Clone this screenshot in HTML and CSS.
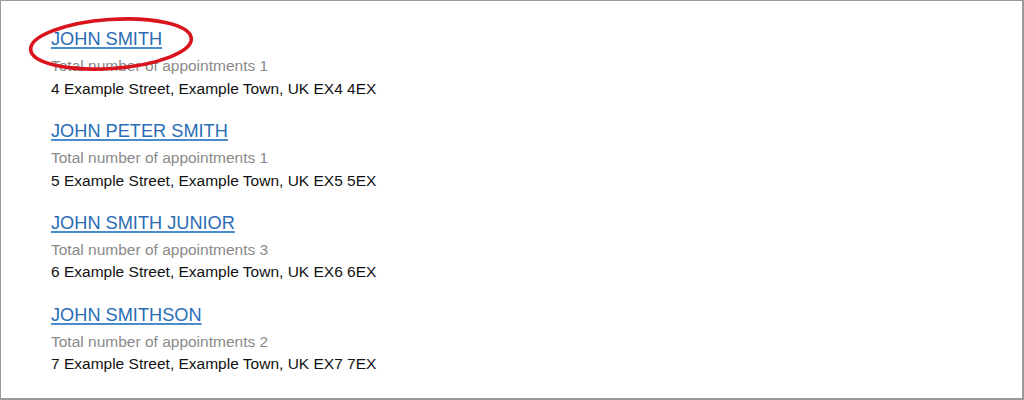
FILE: index.html
```html
<!DOCTYPE html>
<html lang="en">
<head>
<meta charset="utf-8">
<title>Patients</title>
<link rel="stylesheet" href="styles.css">
</head>
<body>
<div class="frame">
  <ul class="results">
    <li class="entry">
      <a class="name" href="#">JOHN SMITH</a>
      <svg class="circle" width="190" height="70" viewBox="0 0 190 70" aria-hidden="true">
        <ellipse cx="90" cy="31" rx="80.5" ry="24.5" fill="none" stroke="#d9141c" stroke-width="3.6" transform="rotate(-4 90 31)"/>
      </svg>
      <div class="count">Total number of appointments 1</div>
      <div class="addr">4 Example Street, Example Town, UK EX4 4EX</div>
    </li>
    <li class="entry">
      <a class="name" href="#">JOHN PETER SMITH</a>
      <div class="count">Total number of appointments 1</div>
      <div class="addr">5 Example Street, Example Town, UK EX5 5EX</div>
    </li>
    <li class="entry">
      <a class="name" href="#">JOHN SMITH JUNIOR</a>
      <div class="count">Total number of appointments 3</div>
      <div class="addr">6 Example Street, Example Town, UK EX6 6EX</div>
    </li>
    <li class="entry">
      <a class="name" href="#">JOHN SMITHSON</a>
      <div class="count">Total number of appointments 2</div>
      <div class="addr">7 Example Street, Example Town, UK EX7 7EX</div>
    </li>
  </ul>
</div>
</body>
</html>
```
FILE: styles.css
```css
html, body {
  margin: 0;
  padding: 0;
  background: #ffffff;
}
body {
  font-family: "Liberation Sans", Arial, sans-serif;
}
.frame {
  box-sizing: border-box;
  width: 1024px;
  height: 400px;
  border: 1px solid #9a9a9a;
  border-right-width: 2px;
  border-bottom-width: 2px;
  padding: 26px 0 0 50px;
}
.results {
  list-style: none;
  margin: 0;
  padding: 0;
  display: flex;
  flex-direction: column;
  gap: 18.7px;
}
.entry {
  position: relative;
  display: flex;
  flex-direction: column;
  align-items: flex-start;
}
.name {
  font-size: 18.2px;
  line-height: 24px;
  margin-bottom: 4.2px;
  color: #2a6db5;
  text-decoration: underline;
  text-decoration-color: #4a8bcc;
  text-decoration-thickness: 2px;
  text-underline-offset: 2px;
}
.circle {
  position: absolute;
  left: -30px;
  top: -14px;
  pointer-events: none;
}
.count {
  font-size: 15.5px;
  line-height: 22.5px;
  color: #8a8a8a;
}
.addr {
  font-size: 15.5px;
  line-height: 22.5px;
  color: #111111;
}
```
